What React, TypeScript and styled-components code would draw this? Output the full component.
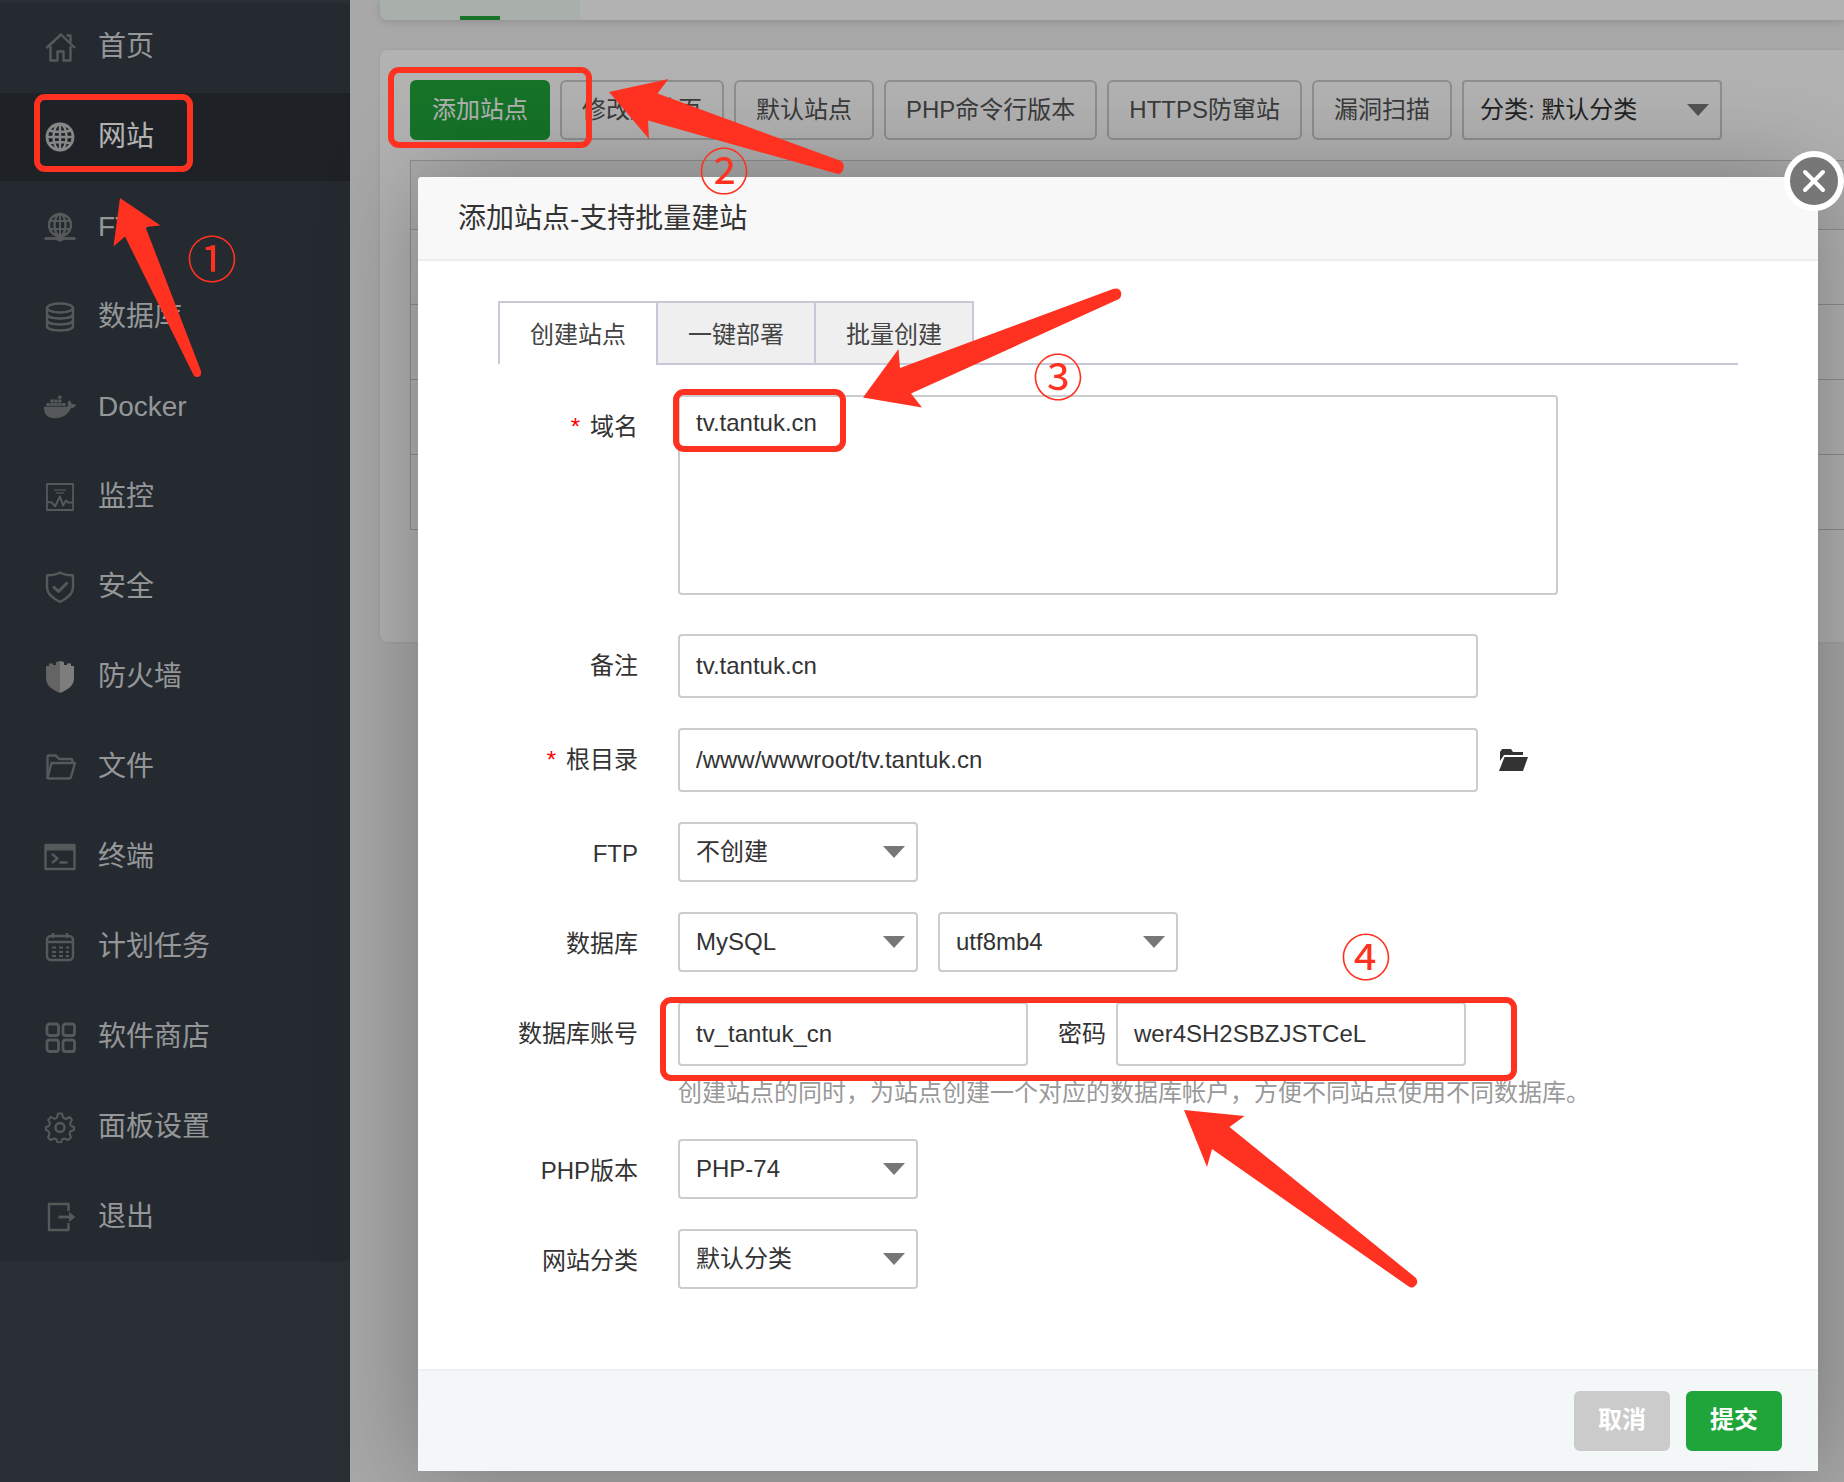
import React from 'react';
import styled, { createGlobalStyle, css } from 'styled-components';
import { FaDocker } from 'react-icons/fa';

const RED = '#ff3120';
const GREEN = '#20a53a';

const GlobalStyle = createGlobalStyle`
  *, *::before, *::after { box-sizing: border-box; }
  body { margin: 0; background: #f1f1f1; }
  body, button, input, select, textarea {
    font-family: "Liberation Sans", "Noto Sans CJK SC", sans-serif;
    font-size: 24px;
    color: #333;
  }
`;

const Page = styled.div`
  position: relative;
  display: flex;
  min-height: 100vh;
  overflow: hidden;
`;

/* ---------- sidebar ---------- */

const Sidebar = styled.nav`
  flex: none;
  width: 350px;
  padding-top: 3px;
  background: #3c444d;
`;

const Menu = styled.ul`
  display: flex;
  flex-direction: column;
  gap: 2px;
  margin: 0;
  padding: 0;
  list-style: none;
  background: #353c45;
`;

const MenuLink = styled.a<{ $active?: boolean }>`
  display: flex;
  align-items: center;
  gap: 22px;
  height: 88px;
  padding-left: 44px;
  font-size: 28px;
  line-height: 40px;
  text-decoration: none;
  color: ${p => (p.$active ? '#fff' : '#d4d7da')};
  background: ${p => (p.$active ? '#2c3138' : 'transparent')};

  svg {
    flex: none;
    width: 32px;
    height: 32px;
    color: ${p => (p.$active ? '#c0c2c2' : '#7c8082')};
  }
`;

const Glyph = ({ children }: { children: React.ReactNode }) => (
  <svg viewBox="0 0 32 32" fill="none" stroke="currentColor" strokeWidth="2.400" strokeLinejoin="round" aria-hidden="true">
    {children}
  </svg>
);

const HomeIcon = () => (
  <Glyph>
    <path d="M2.500 17 17 3.500 31 17" />
    <path d="M6.500 15v14.500h7v-9h6v9h7V15" />
    <path d="M22.500 4.500h4v7" />
  </Glyph>
);

const GlobeIcon = () => (
  <Glyph>
    <circle cx="16" cy="16" r="13" strokeWidth="2.800" />
    <ellipse cx="16" cy="16" rx="6.500" ry="13" />
    <path d="M16 3v26M3 16h26M5 9.500q11 3 22 0M5 22.500q11-3 22 0" />
  </Glyph>
);

const FtpIcon = () => (
  <Glyph>
    <circle cx="16" cy="14" r="11" />
    <ellipse cx="16" cy="14" rx="5.500" ry="11" />
    <path d="M16 3v22M6 10h20M6 18h20" strokeWidth="2" />
    <path d="M.5 27.500h31" strokeWidth="2.800" />
    <circle cx="16" cy="27" r="3.500" fill="currentColor" stroke="none" />
  </Glyph>
);

const DatabaseIcon = () => (
  <Glyph>
    <ellipse cx="16" cy="7" rx="13" ry="4.500" />
    <path d="M3 7v18c0 6 26 6 26 0V7M3 13c0 6 26 6 26 0M3 19c0 6 26 6 26 0" />
  </Glyph>
);

const MonitorIcon = () => (
  <Glyph>
    <rect x="3" y="3" width="26" height="26" strokeWidth="1.800" />
    <path d="M10 9h12M12 12h8" strokeWidth="1.800" opacity=".6" />
    <path d="m3 21 5 .5 3 4 5-10 3 9 3-5 2 2h5" strokeWidth="2" />
  </Glyph>
);

const ShieldIcon = () => (
  <Glyph>
    <path d="M16 1.500c4 2.500 8 2.500 13 3v12c0 7-6 11-13 14.500C9 27.500 3 23.500 3 16.500v-12c5-.500 9-.500 13-3z" />
    <path d="m9 15.500 5.500 5 9-9" strokeWidth="3" />
  </Glyph>
);

const FirewallIcon = () => (
  <Glyph>
    <path d="M16 0v32C8 28.500 2 25 2 17V5h3V2.500h4V4h3V1z" fill="#8e908f" stroke="none" />
    <path d="M16 0v32c8-3.500 14-7 14-15V5h-3V2.500h-4V4h-3V1z" fill="#b4b5b2" stroke="none" />
  </Glyph>
);

const FilesIcon = () => (
  <Glyph>
    <path d="M3.500 27V6q0-1.500 1.500-1.500h7l3 3.500h12q1.500 0 1.500 3" />
    <path d="m3.500 27 4-15h23.500l-4 14q-.5 1.500-2 1.500H4z" />
  </Glyph>
);

const TerminalIcon = () => (
  <Glyph>
    <rect x="1.500" y="4" width="29" height="24" />
    <path d="M1 3h30v6.500H1z" fill="currentColor" stroke="none" />
    <path d="m8 13 5.500 4.500L8 22M15.500 21.500h8" />
  </Glyph>
);

const CalendarIcon = () => (
  <Glyph>
    <rect x="3" y="5" width="26" height="24" rx="4" />
    <path d="M9 2v5M23 2v5M3 11h26" />
    <path d="M8 16.500h4m3 0h4m3 0h3M8 21h4m3 0h4m3 0h3M8 25h4m3 0h4m3 0h3" strokeWidth="1.800" />
  </Glyph>
);

const StoreIcon = () => (
  <Glyph>
    {[3, 19].map(y => [3, 19].map(x => <rect key={`${x}-${y}`} x={x} y={y} width="11.500" height="11.500" rx="2.500" strokeWidth="2.800" />))}
  </Glyph>
);

const GearIcon = () => (
  <Glyph>
    <path d="M14 2.500h4l1 4 3 1.500 3.700-2 2.300 2.800-2 3.700 1 2.500 3 1v3l-3.500 1.200-1 2.800 1.500 3.500-3 2.500-3.500-1.500-2.500 1-1 3h-3.500l-1-3-2.500-1-3.500 1.500-2.500-2.500 1.500-3.500-1-2.800L2 19v-3l3-1 1-2.500-1.700-3.700L7 6l3.500 2L13 6.500z" strokeWidth="2" />
    <circle cx="16" cy="16.500" r="4.500" />
  </Glyph>
);

const LogoutIcon = () => (
  <Glyph>
    <path d="M24.500 10V3H5v26h19.500v-7" />
    <path d="M14.500 16H28" strokeWidth="2.800" />
    <path d="m25 11 6.500 5-6.500 5z" fill="currentColor" stroke="none" />
  </Glyph>
);

const DockerIcon = () => <FaDocker aria-hidden="true" />;

const MENU = [
  { label: '首页', Icon: HomeIcon },
  { label: '网站', Icon: GlobeIcon, active: true },
  { label: 'FTP', Icon: FtpIcon },
  { label: '数据库', Icon: DatabaseIcon },
  { label: 'Docker', Icon: DockerIcon },
  { label: '监控', Icon: MonitorIcon },
  { label: '安全', Icon: ShieldIcon },
  { label: '防火墙', Icon: FirewallIcon },
  { label: '文件', Icon: FilesIcon },
  { label: '终端', Icon: TerminalIcon },
  { label: '计划任务', Icon: CalendarIcon },
  { label: '软件商店', Icon: StoreIcon },
  { label: '面板设置', Icon: GearIcon },
  { label: '退出', Icon: LogoutIcon },
];

/* ---------- page behind the dialog ---------- */

const Main = styled.main`
  flex: 1;
  min-width: 0;
  display: flex;
  flex-direction: column;
  gap: 30px;
  padding-left: 30px;
`;

const TopTabs = styled.div`
  display: flex;
  height: 20px;
  background: #fff;
  border-radius: 0 0 0 8px;
  box-shadow: 0 2px 8px rgba(0, 0, 0, 0.14);
`;

const TopTab = styled.div`
  display: flex;
  align-items: flex-end;
  justify-content: center;
  width: 200px;
  background: #f2fdf6;
  border-radius: 0 0 0 8px;

  &::after {
    content: '';
    width: 40px;
    height: 4px;
    background: ${GREEN};
  }
`;

const Card = styled.section`
  padding: 30px 0 112px 30px;
  background: #fff;
  border-radius: 8px 0 0 8px;
  box-shadow: 0 0 4px rgba(0, 0, 0, 0.08);
`;

const Toolbar = styled.div`
  display: flex;
  gap: 10px;
  margin-bottom: 20px;
`;

const ToolButton = styled.button<{ $primary?: boolean }>`
  flex: none;
  height: 60px;
  padding: 0 20px;
  border: 2px solid ${p => (p.$primary ? GREEN : '#ccc')};
  border-radius: 6px;
  background: ${p => (p.$primary ? GREEN : '#fff')};
  color: ${p => (p.$primary ? '#fff' : '#555')};
  line-height: 56px;
  white-space: nowrap;
`;

const Grid = styled.div`
  border: 1px solid #ccc;
  border-right: 0;
`;

const GridHead = styled.div`
  height: 68px;
  background: #f6f6f6;
`;

const GridRow = styled.div`
  height: 75px;
  border-top: 1px solid #ccc;
`;

const Shade = styled.div`
  position: absolute;
  inset: 0;
  background: rgba(0, 0, 0, 0.3);
`;

/* ---------- form controls ---------- */

const fieldBox = css`
  border: 2px solid #ccc;
  border-radius: 4px;
  background: #fff;
  outline: none;
`;

const Input = styled.input<{ $width: number }>`
  ${fieldBox}
  width: ${p => p.$width}px;
  height: 64px;
  padding: 0 16px;
`;

const TextArea = styled.textarea`
  ${fieldBox}
  display: block;
  width: 880px;
  height: 200px;
  padding: 8px 16px;
  line-height: 36px;
  resize: none;
`;

const SelectBox = styled.span<{ $width: number }>`
  position: relative;
  display: block;
  flex: none;
  width: ${p => p.$width}px;
  height: 60px;

  &::after {
    content: '';
    position: absolute;
    top: 24px;
    right: 13px;
    border: 11px solid transparent;
    border-top: 12px solid #777;
    border-bottom: 0;
    pointer-events: none;
  }
`;

const NativeSelect = styled.select`
  ${fieldBox}
  appearance: none;
  width: 100%;
  height: 100%;
  padding: 0 40px 2px 16px;
`;

interface SelectProps {
  id?: string;
  label?: string;
  value: string;
  width?: number;
}

const Select = ({ id, label, value, width = 240 }: SelectProps) => (
  <SelectBox $width={width}>
    <NativeSelect id={id} aria-label={label} defaultValue={value}>
      <option>{value}</option>
    </NativeSelect>
  </SelectBox>
);

/* ---------- dialog ---------- */

const Dialog = styled.section`
  position: absolute;
  top: 177px;
  left: 418px;
  right: 26px;
  background: #fff;
  border-radius: 4px 4px 0 0;
  box-shadow: 2px 2px 100px rgba(0, 0, 0, 0.3);
`;

const DialogTitle = styled.h2`
  height: 84px;
  margin: 0;
  padding: 0 40px;
  border-bottom: 2px solid #eee;
  border-radius: 4px 4px 0 0;
  background: #f8f8f8;
  font-size: 28px;
  font-weight: 400;
  line-height: 84px;
`;

const CloseButton = styled.button`
  position: absolute;
  top: -26px;
  right: -26px;
  display: flex;
  align-items: center;
  justify-content: center;
  width: 60px;
  height: 60px;
  padding: 0;
  border: 6px solid #fff;
  border-radius: 50%;
  background: #777;
`;

const DialogBody = styled.form`
  padding: 40px 80px 80px;
`;

const Tabs = styled.div`
  display: flex;
  height: 64px;
  margin-bottom: 30px;
  border-bottom: 2px solid #c8c8d4;
`;

const Tab = styled.button<{ $active?: boolean }>`
  width: 160px;
  height: 64px;
  padding: 4px 0 0;
  border: 2px solid #c8c8d8;
  border-bottom-color: ${p => (p.$active ? '#fff' : '#c8c8d8')};
  background: ${p => (p.$active ? '#fff' : '#efefef')};
  color: #444;
  line-height: 56px;

  & + & {
    margin-left: -2px;
  }
`;

const Fields = styled.div`
  display: flex;
  flex-direction: column;
  gap: 30px;
`;

const Row = styled.div<{ $tall?: boolean }>`
  display: grid;
  grid-template-columns: 140px 1fr;
  column-gap: 40px;
  align-items: start;
  padding-bottom: ${p => (p.$tall ? 9 : 0)}px;
`;

const Label = styled.label`
  height: 60px;
  line-height: 64px;
  text-align: right;
  white-space: nowrap;
`;

const Star = styled.span`
  margin-right: 10px;
  color: #f00;
`;

const Controls = styled.div`
  display: flex;
  align-items: center;
  gap: 20px;
`;

const PasswordLabel = styled.label`
  display: flex;
  align-items: center;
  gap: 10px;
  margin-left: 10px;
  line-height: 64px;
`;

const BrowseButton = styled.button`
  display: flex;
  padding: 0;
  border: 0;
  background: none;
`;

const Hint = styled.p`
  margin: 11px 0 0;
  color: #999;
  line-height: 32px;
  white-space: nowrap;
`;

const DialogFooter = styled.footer`
  display: flex;
  justify-content: flex-end;
  gap: 16px;
  padding: 20px 36px;
  border-top: 2px solid #edf1f2;
  background: #f4f7f7;
`;

const FooterButton = styled.button<{ $primary?: boolean }>`
  width: 96px;
  height: 60px;
  padding: 0 0 8px;
  border: 0;
  border-radius: 6px;
  background: ${p => (p.$primary ? GREEN : '#cbcbcb')};
  color: #fff;
  font-weight: 700;
`;

/* ---------- red markers drawn over the screen ---------- */

const Drawing = styled.svg`
  position: absolute;
  top: 0;
  left: 0;
  pointer-events: none;
`;

const Step = styled.span<{ $x: number; $y: number }>`
  position: absolute;
  left: ${p => p.$x - 30}px;
  top: ${p => p.$y - 32}px;
  width: 60px;
  height: 60px;
  color: ${RED};
  font-family: "Noto Sans CJK SC", sans-serif;
  font-size: 50px;
  font-weight: 400;
  line-height: 60px;
  text-align: center;
  pointer-events: none;
`;

const FRAMES = [
  { x: 37, y: 97, width: 153, height: 72 },
  { x: 391, y: 70, width: 198, height: 75 },
  { x: 676, y: 392, width: 167, height: 57 },
  { x: 663, y: 1000, width: 851, height: 78 },
];

const ARROWS = [
  'M120 198 160.500 225.500 145.500 227 201 371Q202 377 197 377 194 377 193 374L125 236.500 113.500 246.500z',
  'M609 92 668.500 79 657.500 93.500 841 161Q845 164 843.500 168 842 174 838 174L648 120.500 649 139z',
  'M863 397.500 898.500 349 900 368 1113 289Q1119 287 1121 292 1122 297 1119 299L911 393.500 922 407.500z',
  'M1184 1110 1244.500 1116 1229.500 1127 1416 1278Q1419 1283 1415 1286 1412 1289 1408 1286L1212 1149 1207 1167z',
];

const STEPS = [
  { mark: '①', x: 212, y: 258 },
  { mark: '②', x: 724, y: 170 },
  { mark: '③', x: 1058, y: 376 },
  { mark: '④', x: 1366, y: 956 },
];

export default function App() {
  return (
    <Page>
      <GlobalStyle />
      <Sidebar>
        <Menu>
          {MENU.map(({ label, Icon, active }) => (
            <li key={label}>
              <MenuLink href="#" $active={active}>
                <Icon />
                <span>{label}</span>
              </MenuLink>
            </li>
          ))}
        </Menu>
      </Sidebar>

      <Main>
        <TopTabs>
          <TopTab />
        </TopTabs>
        <Card>
          <Toolbar>
            <ToolButton $primary>添加站点</ToolButton>
            <ToolButton>修改默认页</ToolButton>
            <ToolButton>默认站点</ToolButton>
            <ToolButton>PHP命令行版本</ToolButton>
            <ToolButton>HTTPS防窜站</ToolButton>
            <ToolButton>漏洞扫描</ToolButton>
            <Select label="分类" value="分类: 默认分类" width={260} />
          </Toolbar>
          <Grid>
            <GridHead />
            <GridRow />
            <GridRow />
            <GridRow />
            <GridRow />
          </Grid>
        </Card>
      </Main>

      <Shade />

      <Dialog role="dialog" aria-labelledby="dialog-title">
        <DialogTitle id="dialog-title">添加站点-支持批量建站</DialogTitle>
        <CloseButton type="button" aria-label="关闭">
          <svg width="24" height="24" viewBox="0 0 24 24" stroke="#fff" strokeWidth="4" strokeLinecap="round">
            <path d="m3 3 18 18M21 3 3 21" />
          </svg>
        </CloseButton>
        <DialogBody>
          <Tabs>
            <Tab type="button" $active>创建站点</Tab>
            <Tab type="button">一键部署</Tab>
            <Tab type="button">批量创建</Tab>
          </Tabs>
          <Fields>
            <Row $tall>
              <Label htmlFor="domain"><Star>*</Star>域名</Label>
              <TextArea id="domain" defaultValue="tv.tantuk.cn" />
            </Row>
            <Row>
              <Label htmlFor="remark">备注</Label>
              <Input id="remark" $width={800} defaultValue="tv.tantuk.cn" />
            </Row>
            <Row>
              <Label htmlFor="root-dir"><Star>*</Star>根目录</Label>
              <Controls>
                <Input id="root-dir" $width={800} defaultValue="/www/wwwroot/tv.tantuk.cn" />
                <BrowseButton type="button" aria-label="选择目录">
                  <svg width="30" height="24" viewBox="0 0 30 24" fill="#333">
                    <path d="M2 13V4l2-3h9l2 3h10v3H6z" />
                    <path d="M6.500 9H30l-5 14H1z" />
                  </svg>
                </BrowseButton>
              </Controls>
            </Row>
            <Row>
              <Label htmlFor="ftp">FTP</Label>
              <Select id="ftp" value="不创建" />
            </Row>
            <Row>
              <Label htmlFor="database">数据库</Label>
              <Controls>
                <Select id="database" value="MySQL" />
                <Select label="字符集" value="utf8mb4" />
              </Controls>
            </Row>
            <Row>
              <Label htmlFor="db-user">数据库账号</Label>
              <div>
                <Controls>
                  <Input id="db-user" $width={350} defaultValue="tv_tantuk_cn" />
                  <PasswordLabel>
                    密码
                    <Input $width={350} defaultValue="wer4SH2SBZJSTCeL" />
                  </PasswordLabel>
                </Controls>
                <Hint>创建站点的同时，为站点创建一个对应的数据库帐户，方便不同站点使用不同数据库。</Hint>
              </div>
            </Row>
            <Row>
              <Label htmlFor="php">PHP版本</Label>
              <Select id="php" value="PHP-74" />
            </Row>
            <Row>
              <Label htmlFor="category">网站分类</Label>
              <Select id="category" value="默认分类" />
            </Row>
          </Fields>
        </DialogBody>
        <DialogFooter>
          <FooterButton type="button">取消</FooterButton>
          <FooterButton type="button" $primary>提交</FooterButton>
        </DialogFooter>
      </Dialog>

      <Drawing width="1844" height="1482" viewBox="0 0 1844 1482" aria-hidden="true">
        {FRAMES.map(frame => (
          <rect key={frame.y} {...frame} rx="8" fill="none" stroke={RED} strokeWidth="6" />
        ))}
        {ARROWS.map(d => (
          <path key={d} d={d} fill={RED} />
        ))}
      </Drawing>
      {STEPS.map(({ mark, x, y }) => (
        <Step key={mark} $x={x} $y={y}>{mark}</Step>
      ))}
    </Page>
  );
}
